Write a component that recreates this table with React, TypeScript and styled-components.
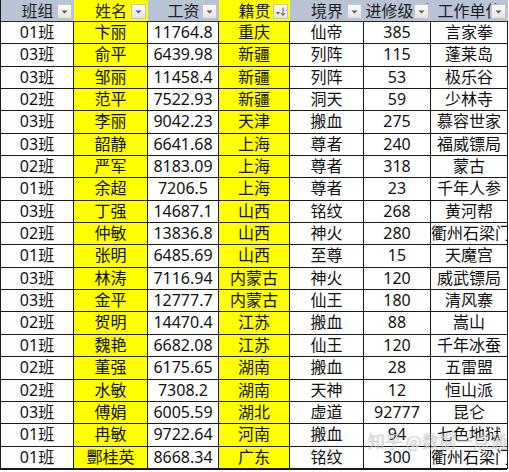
import React from 'react';
import styled, { createGlobalStyle } from 'styled-components';

const Global = createGlobalStyle`
  html, body { margin: 0; padding: 0; background: #ffffff; }
  body { font-family: "Noto Sans", "Noto Sans CJK SC", sans-serif; }
`;

type Col = { title: string; width: number; yellow?: boolean; sorted?: boolean };

const COLS: Col[] = [
  { title: '班组', width: 73 },
  { title: '姓名', width: 74, yellow: true },
  { title: '工资', width: 71 },
  { title: '籍贯', width: 71, yellow: true, sorted: true },
  { title: '境界', width: 74 },
  { title: '进修级别', width: 67 },
  { title: '工作单位', width: 77 },
];

const ROWS: string[][] = [
  ['01班', '卞丽', '11764.8', '重庆', '仙帝', '385', '言家拳'],
  ['03班', '俞平', '6439.98', '新疆', '列阵', '115', '蓬莱岛'],
  ['03班', '邹丽', '11458.4', '新疆', '列阵', '53', '极乐谷'],
  ['02班', '范平', '7522.93', '新疆', '洞天', '59', '少林寺'],
  ['03班', '李丽', '9042.23', '天津', '搬血', '275', '慕容世家'],
  ['03班', '韶静', '6641.68', '上海', '尊者', '240', '福威镖局'],
  ['02班', '严军', '8183.09', '上海', '尊者', '318', '蒙古'],
  ['01班', '余超', '7206.5', '上海', '尊者', '23', '千年人参'],
  ['03班', '丁强', '14687.1', '山西', '铭纹', '268', '黄河帮'],
  ['02班', '仲敏', '13836.8', '山西', '神火', '280', '衢州石梁门'],
  ['01班', '张明', '6485.69', '山西', '至尊', '15', '天魔宫'],
  ['03班', '林涛', '7116.94', '内蒙古', '神火', '120', '威武镖局'],
  ['03班', '金平', '12777.7', '内蒙古', '仙王', '180', '清风寨'],
  ['02班', '贺明', '14470.4', '江苏', '搬血', '88', '嵩山'],
  ['01班', '魏艳', '6682.08', '江苏', '仙王', '120', '千年冰蚕'],
  ['02班', '董强', '6175.65', '湖南', '搬血', '28', '五雷盟'],
  ['02班', '水敏', '7308.2', '湖南', '天神', '12', '恒山派'],
  ['03班', '傅娟', '6005.59', '湖北', '虚道', '92777', '昆仑'],
  ['01班', '冉敏', '9722.64', '河南', '搬血', '94', '七色地狱'],
  ['01班', '酆桂英', '8668.34', '广东', '铭纹', '300', '衢州石梁门'],
];

const Frame = styled.div`
  position: relative;
  width: 509px;
  height: 472px;
  overflow: hidden;
  background: #ffffff;
`;

const Sheet = styled.div`
  display: grid;
  grid-template-columns: ${COLS.map((c) => `${c.width}px`).join(' ')};
  grid-template-rows: 22px repeat(20, 22.35px);
  width: 507px;
  border-left: 1px solid #1a1a1a;
  border-bottom: 1px solid #1a1a1a;
  box-sizing: border-box;
`;

const HeadCell = styled.div<{ $yellow?: boolean }>`
  position: relative;
  box-sizing: border-box;
  background: ${(p) => (p.$yellow ? '#ffff00' : '#b8c3d6')};
  border-bottom: 1px solid #2a2a2a;
  overflow: hidden;
  display: flex;
  align-items: center;
  justify-content: center;
  font-size: 16px;
  line-height: 20px;
  color: #1e1e1e;
  white-space: nowrap;
`;

const Cell = styled.div<{ $yellow?: boolean }>`
  box-sizing: border-box;
  background: ${(p) => (p.$yellow ? '#ffff00' : '#ffffff')};
  border-right: 1px solid #1a1a1a;
  border-bottom: 1px solid #1a1a1a;
  overflow: hidden;
  text-align: center;
  font-size: 16px;
  line-height: 21px;
  color: #111111;
  white-space: nowrap;
`;

const FilterBtn = styled.span`
  position: absolute;
  right: 2px;
  top: 4px;
  width: 15px;
  height: 15px;
  box-sizing: border-box;
  border: 1px solid #c4c4c4;
  background: linear-gradient(#fbfbfb, #e4e4e4);
  display: flex;
  align-items: center;
  justify-content: center;
`;

const Watermark = styled.div`
  position: absolute;
  left: 368px;
  top: 428px;
  font-family: "Noto Sans CJK SC", sans-serif;
  font-size: 17px;
  color: rgba(255, 255, 255, 0.55);
  text-shadow: 0 0 1px rgba(90, 90, 90, 0.55);
  white-space: nowrap;
  pointer-events: none;
`;

function FilterIcon({ sorted }: { sorted?: boolean }) {
  if (sorted) {
    return (
      <svg width="13" height="13" viewBox="0 0 13 13">
        <path d="M2 7 L6 7 L4 9.5 Z" fill="#5a5a5a" />
        <path d="M9 2.5 V10" stroke="#5a5a5a" strokeWidth="1" />
        <path d="M7 8 L9 10.5 L11 8" stroke="#5a5a5a" strokeWidth="1" fill="none" />
      </svg>
    );
  }
  return (
    <svg width="13" height="13" viewBox="0 0 13 13">
      <path d="M3.5 5.5 L9.5 5.5 L6.5 8.5 Z" fill="#5a5a5a" />
    </svg>
  );
}

export default function App() {
  return (
    <Frame>
      <Global />
      <Sheet>
        {COLS.map((c) => (
          <HeadCell key={c.title} $yellow={c.yellow}>
            {c.title}
            <FilterBtn>
              <FilterIcon sorted={c.sorted} />
            </FilterBtn>
          </HeadCell>
        ))}
        {ROWS.map((r, ri) =>
          r.map((v, ci) => (
            <Cell key={`${ri}-${ci}`} $yellow={COLS[ci].yellow}>
              {v}
            </Cell>
          ))
        )}
      </Sheet>
      <Watermark>知乎 @数据一点通</Watermark>
    </Frame>
  );
}
